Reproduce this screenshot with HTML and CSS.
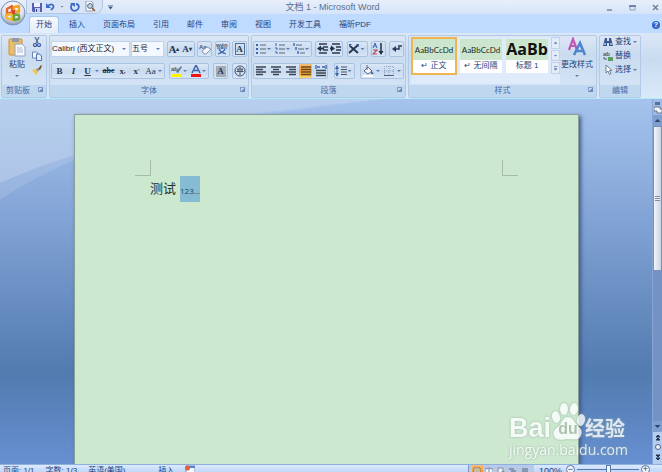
FILE: index.html
```html
<!DOCTYPE html>
<html lang="zh-CN">
<head>
<meta charset="utf-8">
<title>文档 1 - Microsoft Word</title>
<link rel="stylesheet" href="styles.css">
</head>
<body>
<div class="app">
  <header class="titlebar">
    <button class="orb" aria-label="Office">
      <svg viewBox="0 0 26 26" width="26" height="26"><defs><radialGradient id="orb" cx=".5" cy=".3" r=".7"><stop offset="0" stop-color="#fff"/><stop offset=".65" stop-color="#dde3ec"/><stop offset="1" stop-color="#8796ae"/></radialGradient></defs><circle cx="13" cy="13" r="12" fill="url(#orb)" stroke="#7f93b2"/><g fill="none" stroke-width="2.4" stroke-linejoin="round"><path d="M7 9l5-3v6l-5 2z" stroke="#e8622c"/><path d="M14 7l5-1v6l-5-1z" stroke="#f0a428"/><path d="M6 15l6-1v6l-5-2z" stroke="#f2b52c"/><path d="M14 14l5 1v4l-5 1z" stroke="#6aa63c"/></g><path d="M12 10h3v4h-3z" fill="#d9442a"/></svg>
    </button>
    <div class="quick">
      <button aria-label="保存"><svg viewBox="0 0 10 10" width="10" height="10"><path d="M0 1h10v9H1L0 9z" fill="#5360b4"/><path d="M2 1h6v4H2z" fill="#eef2ff"/><path d="M3 6h5v4H3z" fill="#c8d0ea"/><path d="M4 7h1v3H4z" fill="#3b468e"/></svg></button>
      <button aria-label="撤消"><svg viewBox="0 0 10 10" width="10" height="10"><path d="M2 4c3-3 7-1 5 2L5 8" fill="none" stroke="#3c6cc8" stroke-width="1.8"/><path d="M0 1v5h5z" fill="#3c6cc8"/></svg></button>
      <i class="arr"></i>
      <button aria-label="恢复"><svg viewBox="0 0 10 10" width="10" height="10"><path d="M2 2C-1 8 4 10 7 8s2-6-1-6" fill="none" stroke="#3c6cc8" stroke-width="1.8"/><path d="M0 1h5v4z" fill="#3c6cc8"/></svg></button>
      <button aria-label="打印预览"><svg viewBox="0 0 12 11" width="12" height="11"><path d="M2 0h5l2 2v8H2z" fill="#fff" stroke="#8b98b0"/><circle cx="6" cy="5" r="2.4" fill="#bcdcec" stroke="#55657d"/><path d="M8 7l3 3" stroke="#8a5d30" stroke-width="1.6"/></svg></button>
    </div>
    <i class="more"></i>
    <h1>文档 1 - Microsoft Word</h1>
    <div class="winctl">
      <button aria-label="最小化"><svg viewBox="0 0 7 7" width="7" height="7"><path d="M1 6h5" stroke="#6a7f9f" stroke-width="1.4"/></svg></button>
      <button aria-label="最大化"><svg viewBox="0 0 7 7" width="7" height="7"><path d="M1 2h5v4H1z" fill="none" stroke="#8ba0bd"/><path d="M0 2h7" stroke="#61769a" stroke-width="1.6"/></svg></button>
      <button aria-label="关闭"><svg viewBox="0 0 7 7" width="7" height="7"><path d="M1 1l5 5M6 1L1 6" stroke="#6a7f9f" stroke-width="1.4"/></svg></button>
    </div>
  </header>

  <nav class="tabs">
    <a href="#" class="on">开始</a><a href="#">插入</a><a href="#">页面布局</a><a href="#">引用</a><a href="#">邮件</a><a href="#">审阅</a><a href="#">视图</a><a href="#">开发工具</a><a href="#">福昕PDF</a>
    <button class="help" aria-label="帮助">?</button>
  </nav>

  <main class="ribbon">
    <section class="group clip">
      <div class="body">
        <button class="paste"><svg viewBox="0 0 18 20" width="18" height="20"><rect x="1" y="2" width="13" height="16" rx="1" fill="#edbd62" stroke="#c9923c"/><path d="M4 1h7v4H4z" fill="#8f99a8"/><path d="M7 7h7l3 3v9H7z" fill="#f7faff" stroke="#90a3c3"/><path d="M9 11h5M9 13h6M9 15h6" stroke="#a9b9d3"/></svg><span>粘贴</span><i class="arr"></i></button>
        <div class="side">
          <button aria-label="剪切"><svg viewBox="0 0 10 10" width="10" height="10"><path d="M3 0l3 6M7 0L4 6" stroke="#566f9c" stroke-width="1.3"/><circle cx="3" cy="8" r="1.5" fill="none" stroke="#3456a4" stroke-width="1.2"/><circle cx="7" cy="8" r="1.5" fill="none" stroke="#3456a4" stroke-width="1.2"/></svg></button>
          <button aria-label="复制"><svg viewBox="0 0 10 10" width="10" height="10"><path d="M.5 1h4l1 1v5h-5z" fill="#f3f8ff" stroke="#6885bb"/><path d="M4.500 3h3l2 2v4.500h-5z" fill="#e4eeff" stroke="#4b70b5"/></svg></button>
          <button aria-label="格式刷"><svg viewBox="0 0 10 10" width="10" height="10"><path d="M0 5l4-1 2 3-2 3z" fill="#efc650"/><path d="M4 4l2-1 1 2-1 2z" fill="#8890a0"/><path d="M6 4l3-4 1 1-2 4z" fill="#75563a"/></svg></button>
        </div>
      </div>
      <footer>剪贴板<i class="launch"></i></footer>
    </section>

    <section class="group font">
      <div class="body rows">
        <div class="row">
          <div class="combos">
            <label class="combo wide"><select aria-label="字体"><option>Calibri (西文正文)</option></select><i class="arr"></i></label>
            <label class="combo"><select aria-label="字号"><option>五号</option></select><i class="arr"></i></label>
          </div>
          <div class="set"><button class="serif big">A<sup>▴</sup></button><button class="serif">A<sup>▾</sup></button></div>
          <div class="set"><button aria-label="清除格式"><svg viewBox="0 0 12 12" width="12" height="12"><text x="0" y="6" class="tiny">Aa</text><path d="M3 8l5-4 4 2-5 5H5z" fill="#f4f5fa" stroke="#8795b4"/></svg></button></div>
          <div class="set"><button aria-label="拼音指南"><svg viewBox="0 0 12 12" width="12" height="12"><text x="0" y="4" class="tiny">wén</text><path d="M1 5h10M6 4v2M3 6c1 3 4 4 7 5M9 6c-1 3-4 4-7 5" stroke="#3964ae" stroke-width="1.2" fill="none"/></svg></button></div>
          <div class="set"><button class="serif"><b class="boxed">A</b></button></div>
        </div>
        <div class="row">
          <div class="set fmt">
            <button class="serif">B</button><button class="serif ital">I</button><button class="serif under">U</button><i class="arr"></i><button class="serif strike">abc</button><button class="serif">x<sub>,</sub></button><button class="serif">x<sup>'</sup></button><button class="serif thin">Aa</button><i class="arr"></i>
          </div>
          <div class="set">
            <button aria-label="突出显示"><svg viewBox="0 0 12 12" width="12" height="12"><text x="0" y="6" class="tiny">ab</text><path d="M5 7l5-6 1 1-4 6z" fill="#65758f"/><path d="M1 9h10v3H1z" fill="#fff200"/></svg></button><i class="arr"></i>
            <button aria-label="字体颜色"><svg viewBox="0 0 12 12" width="12" height="12"><path d="M2 8l4-8 4 8M4 5.500h4" fill="none" stroke="#3b62aa" stroke-width="1.500"/><path d="M1 9h10v3H1z" fill="#f01414"/></svg></button><i class="arr"></i>
          </div>
          <div class="set"><button class="serif"><b class="shaded">A</b></button></div>
          <div class="set"><button aria-label="带圈字符"><svg viewBox="0 0 12 12" width="12" height="12"><circle cx="6" cy="6" r="5" fill="none" stroke="#47536a"/><path d="M3 4h6M2.500 6.500h7M6 2v8M4 4v2.500M8 4v2.500" stroke="#47536a"/></svg></button></div>
        </div>
      </div>
      <footer>字体<i class="launch"></i></footer>
    </section>

    <section class="group para">
      <div class="body rows">
        <div class="row">
          <div class="set">
            <button aria-label="项目符号"><svg viewBox="0 0 12 12" width="12" height="12"><path d="M1 2h2M1 6h2M1 10h2" stroke="#3d66b1" stroke-width="2"/><path d="M5 2h6M5 6h6M5 10h6" stroke="#5c6678"/></svg></button><i class="arr"></i>
            <button aria-label="编号"><svg viewBox="0 0 12 12" width="12" height="12"><path d="M2 0v3M1 5h2v2M1 9h2v2" stroke="#3d66b1" fill="none"/><path d="M5 2h6M5 6h6M5 10h6" stroke="#5c6678"/></svg></button><i class="arr"></i>
            <button aria-label="多级列表"><svg viewBox="0 0 12 12" width="12" height="12"><path d="M1 0v3M3 4v3M5 8v3" stroke="#3d66b1" stroke-width="1.400"/><path d="M3 2h6M5 6h6M7 10h5" stroke="#5c6678"/></svg></button><i class="arr"></i>
          </div>
          <div class="set">
            <button aria-label="减少缩进量"><svg viewBox="0 0 12 12" width="12" height="12"><path d="M2 1h8M6 4h5M6 7h5M2 10h8" stroke="#30394b" stroke-width="1.500"/><path d="M0 5.500l4-3v6z" fill="#234"/><path d="M3 5.500h4" stroke="#234" stroke-width="2"/></svg></button>
            <button aria-label="增加缩进量"><svg viewBox="0 0 12 12" width="12" height="12"><path d="M2 1h8M6 4h5M6 7h5M2 10h8" stroke="#30394b" stroke-width="1.500"/><path d="M5 5.500l-4-3v6z" fill="#234"/><path d="M0 5.500h3" stroke="#234" stroke-width="2"/></svg></button>
          </div>
          <div class="set"><button aria-label="中文版式"><svg viewBox="0 0 12 12" width="12" height="12"><path d="M1 10l9-8M2 3l8 7" stroke="#26334d" stroke-width="1.800"/><path d="M1 1h3L1 4zM11 1H8l3 3z" fill="#3862aa"/></svg></button><i class="arr"></i></div>
          <div class="set"><button aria-label="排序"><svg viewBox="0 0 12 12" width="12" height="12"><path d="M1 5l2-5 2 5M2 3h2" fill="none" stroke="#3862b4"/><path d="M1 7h4l-4 4h4" fill="none" stroke="#bd4a5e" stroke-width="1.200"/><path d="M9 0v9" stroke="#222d42" stroke-width="1.500"/><path d="M6.500 8h5L9 12z" fill="#222d42"/></svg></button></div>
          <div class="set"><button aria-label="显示编辑标记"><svg viewBox="0 0 12 12" width="12" height="12"><path d="M8 2v4H4M9 3h2" fill="none" stroke="#2a3a58" stroke-width="1.500"/><path d="M5 3v6L1 6z" fill="#2a3a58"/></svg></button></div>
        </div>
        <div class="row">
          <div class="set align">
            <button aria-label="左对齐"><svg viewBox="0 0 12 12" width="12" height="12"><path d="M1 2h10M1 4.500h7M1 7h10M1 9.500h7" stroke="#3a4353" stroke-width="1.400"/></svg></button>
            <button aria-label="居中"><svg viewBox="0 0 12 12" width="12" height="12"><path d="M1 2h10M3 4.500h6M1 7h10M3 9.500h6" stroke="#3a4353" stroke-width="1.400"/></svg></button>
            <button aria-label="右对齐"><svg viewBox="0 0 12 12" width="12" height="12"><path d="M1 2h10M4 4.500h7M1 7h10M4 9.500h7" stroke="#3a4353" stroke-width="1.400"/></svg></button>
            <button class="active" aria-label="两端对齐"><svg viewBox="0 0 12 12" width="12" height="12"><path d="M1 2h10M1 4.500h10M1 7h10M1 9.500h10" stroke="#6b4a18" stroke-width="1.400"/></svg></button>
            <button aria-label="分散对齐"><svg viewBox="0 0 12 12" width="12" height="12"><path d="M1 0v4M11 0v4M2 2h3M7 2h3" stroke="#3b64aa" stroke-width="1.300"/><path d="M1 5.500h10M1 8h10M1 10.500h10" stroke="#3a4353" stroke-width="1.400"/></svg></button>
          </div>
          <div class="set"><button aria-label="行距"><svg viewBox="0 0 12 12" width="12" height="12"><path d="M2 2v8" stroke="#3b64aa"/><path d="M0 4l2-4 2 4zM0 8l2 4 2-4z" fill="#3b64aa"/><path d="M6 2h6M6 4.500h6M6 7h6M6 9.500h6" stroke="#4a5365"/></svg></button><i class="arr"></i></div>
          <div class="set fill">
            <button aria-label="底纹"><svg viewBox="0 0 12 12" width="12" height="12"><path d="M2 6l4-4 4 4-4 3z" fill="#f5f7fc" stroke="#5e6e8c"/><path d="M5 0v5" stroke="#5e6e8c"/><path d="M9 5l3 4H9z" fill="#416db5"/><path d="M1 10h10v2H1z" fill="#fff"/></svg></button><i class="arr"></i>
            <button aria-label="边框"><svg viewBox="0 0 12 12" width="12" height="12"><path d="M1.500 10V1.500h9V10M6 1v9M1 6h10" fill="none" stroke="#8da2c2" stroke-dasharray="1 1"/><path d="M1 10.500h10" stroke="#52617c"/></svg></button><i class="arr"></i>
          </div>
        </div>
      </div>
      <footer>段落<i class="launch"></i></footer>
    </section>

    <section class="group styles">
      <div class="body">
        <div class="gallery">
          <button class="card sel"><span class="sample">AaBbCcDd</span><span class="name">↵ 正文</span></button>
          <button class="card"><span class="sample">AaBbCcDd</span><span class="name">↵ 无间隔</span></button>
          <button class="card"><span class="sample head">AaBb</span><span class="name">标题 1</span></button>
          <div class="spin"><button aria-label="上"><i class="arr up"></i></button><button aria-label="下"><i class="arr"></i></button><button aria-label="更多"><i class="arr bar"></i></button></div>
        </div>
        <button class="change"><svg viewBox="0 0 20 20" width="20" height="20"><path d="M2 13L6 2l4 11M3 9h6" fill="none" stroke="#c058b4" stroke-width="2.200"/><path d="M7 18l6-12 5 12M9 14h7" fill="none" stroke="#4f84cf" stroke-width="2.600"/></svg><span>更改样式</span><i class="arr"></i></button>
      </div>
      <footer>样式<i class="launch"></i></footer>
    </section>

    <section class="group edit">
      <div class="body">
        <button><svg viewBox="0 0 10 10" width="10" height="10"><path d="M2 1h2v3h2V1h2l2 8H6V6H4v3H0z" fill="#3b568c"/><path d="M1 6h2v2H1zM7 6h2v2H7z" fill="#8fb2e5"/></svg>查找<i class="arr"></i></button>
        <button><svg viewBox="0 0 10 10" width="10" height="10"><text x="0" y="5" class="tiny">ab</text><path d="M1 6v2h3" fill="none" stroke="#4b5c7c"/><path d="M5 6h5v4H5z" fill="#57a05c"/></svg>替换</button>
        <button><svg viewBox="0 0 10 10" width="10" height="10"><path d="M3 0v8l2-2 1.500 3.500 1.500-1L6.500 5.500H9z" fill="#fff" stroke="#6b7c98"/></svg>选择<i class="arr"></i></button>
      </div>
      <footer>编辑</footer>
    </section>
  </main>

  <div class="work">
    <svg class="backdrop" viewBox="0 0 652 366" preserveAspectRatio="none"><defs><linearGradient id="sw" x1="0" y1="0" x2="0" y2="1"><stop offset="0" stop-color="#fff" stop-opacity=".1"/><stop offset="1" stop-color="#fff" stop-opacity=".2"/></linearGradient></defs><path d="M0 0h380Q170 24 74 56Q36 68 0 84z" fill="url(#sw)"/><path d="M0 0h380Q170 18 74 61Q34 78 0 101z" fill="#fff" opacity=".12"/></svg>
    <div class="canvas">
      <article class="page">
        <div class="marks"><i></i><i></i></div>
        <p><span>测试</span><mark>123...</mark></p>
      </article>
    </div>
    <div class="scroll">
      <button class="split" aria-label="拆分"></button>
      <button class="ruler" aria-label="标尺"><svg viewBox="0 0 8 8" width="8" height="8"><path d="M0 1h6v2h2v4H3V5H0z" fill="#f4f5fb" stroke="#6d7691"/></svg></button>
      <button class="dir" aria-label="向上"><i class="arr up"></i></button>
      <div class="track"><div class="thumb"><i></i></div></div>
      <button class="dir" aria-label="向下"><i class="arr"></i></button>
      <div class="browse">
        <svg viewBox="0 0 8 30" width="8" height="30"><path d="M2 5l2-2 2 2zM2 8l2-2 2 2zM2 23h4l-2 2zM2 26h4l-2 2z" fill="#26344f" stroke="#26344f"/><circle cx="4" cy="15" r="2.500" fill="#f0f4fa" stroke="#52617c"/></svg>
      </div>
    </div>
    <div class="brand">
      <div class="line"><b>Bai</b><span class="paw"><svg viewBox="0 0 34 39" width="34" height="39"><g fill="#fff"><ellipse cx="5" cy="15" rx="4" ry="6" transform="rotate(-12 5 15)"/><ellipse cx="13" cy="7" rx="4" ry="6"/><ellipse cx="23" cy="7" rx="4" ry="6" transform="rotate(8 23 7)"/><ellipse cx="30" cy="18" rx="4" ry="6" transform="rotate(12 30 18)"/><path d="M17 15c5 0 6 5 9 8s6 5 4 10c-2 6-8 4-13 4S6 40 3 34c-2-6 3-8 6-11 2-3 3-8 8-8z"/></g></svg><em>du</em></span><strong>经验</strong></div>
      <div class="url">jingyan.baidu.com</div>
    </div>
  </div>

  <footer class="status">
    <span>页面: 1/1</span><span>字数: 1/3</span><span class="lang">英语(美国)</span><span class="ins">插入</span>
    <svg class="rec" viewBox="0 0 10 10" width="10" height="10"><path d="M1 1h9v8H1z" fill="#f6f8ff" stroke="#6e8cc0"/><path d="M1 1h9v2H1z" fill="#5b82cc"/><circle cx="2.500" cy="3" r="2.500" fill="#e0603c"/></svg>
    <div class="views">
      <button class="active" aria-label="页面视图"><svg viewBox="0 0 8 8" width="8" height="8"><path d="M1 1h6v7H1z" fill="#fff" stroke="#8c7650"/><path d="M2 3h4M2 5h4" stroke="#8c7650"/></svg></button>
      <button aria-label="阅读版式"><svg viewBox="0 0 8 8" width="8" height="8"><path d="M0 2l4-1 4 1v6H0zM4 1v7" fill="#eef2fa" stroke="#7c8aa5"/></svg></button>
      <button aria-label="Web 版式"><svg viewBox="0 0 8 8" width="8" height="8"><path d="M1 1h5v6H1z" fill="#eef2fa" stroke="#7c8aa5"/><circle cx="6" cy="6" r="2" fill="#74977c"/></svg></button>
      <button aria-label="大纲"><svg viewBox="0 0 8 8" width="8" height="8"><path d="M0 2h5M2 4h5M3 6h5" stroke="#7786a0" stroke-width="1.500"/></svg></button>
      <button aria-label="普通"><svg viewBox="0 0 8 8" width="8" height="8"><path d="M1 2h6M1 4h6M1 6h6" stroke="#7786a0" stroke-width="1.500"/></svg></button>
    </div>
    <span class="pct">100%</span><button class="zoom" aria-label="缩小">−</button><input class="slider" type="range" aria-label="显示比例" value="50"><button class="zoom" aria-label="放大">+</button>
  </footer>
</div>
</body>
</html>
```
FILE: styles.css
```css
* { box-sizing: border-box; }
body {
  margin: 0;
  height: 100vh;
  overflow: hidden;
  font: 8px/12px "Liberation Sans", "Noto Sans CJK SC", sans-serif;
  color: #24427c;
}
button, select {
  margin: 0;
  padding: 0;
  border: 0;
  background: none;
  font: inherit;
  color: inherit;
}
button { display: flex; align-items: center; justify-content: center; }
svg { display: block; flex: none; }
a { color: inherit; text-decoration: none; }
.tiny { font: bold 6px "Liberation Sans", sans-serif; fill: #4a5872; }

.arr {
  flex: none;
  width: 4px;
  height: 2px;
  background: #5f7cab;
  clip-path: polygon(0 0, 100% 0, 50% 100%);
}
.arr.up { clip-path: polygon(50% 0, 100% 100%, 0 100%); }
.arr.bar { height: 5px; clip-path: polygon(0 0, 100% 0, 100% 20%, 0 20%, 0 50%, 100% 50%, 50% 100%, 0 50%); }

.app {
  display: flex;
  flex-direction: column;
  height: calc(100vh + 10px);
}

/* Title bar */
.titlebar {
  position: relative;
  display: flex;
  align-items: center;
  flex: none;
  height: 14px;
  padding-left: 26px;
  background: linear-gradient(#e8effa, #d5e4f8);
}
.orb { position: absolute; left: 0; top: 0; z-index: 2; }
.quick {
  display: flex;
  align-items: center;
  gap: 4px;
  height: 14px;
  padding: 0 6px 0 5px;
  border: 1px solid #b4c7e2;
  border-top: 0;
  border-radius: 0 0 8px 0;
  background: #d9e5f6;
}
.quick .arr { margin-right: 2px; }
.more {
  width: 5px;
  height: 5px;
  margin-left: 5px;
  background: #3f598c;
  clip-path: polygon(0 0, 100% 0, 100% 20%, 0 20%, 0 40%, 100% 40%, 50% 100%, 0 40%);
}
h1 {
  flex: 1;
  margin: 0;
  padding-right: 54px;
  text-align: center;
  font-size: 9px;
  line-height: 12px;
  font-weight: normal;
  color: #5a6d92;
}
.winctl { display: flex; gap: 16px; padding-right: 3px; }

/* Tabs */
.tabs {
  display: flex;
  align-items: stretch;
  flex: none;
  gap: 2px;
  height: 19px;
  padding: 2px 2px 0 29px;
  background: #bfdbff;
}
.tabs a { padding: 3px 8px 0; white-space: nowrap; }
.tabs .on {
  border: 1px solid #a9c5ea;
  border-bottom: 0;
  border-radius: 3px 3px 0 0;
  background: linear-gradient(#f4f9ff, #e2edfa);
  padding: 2px 6px 0;
}
.help {
  align-self: center;
  width: 8px;
  height: 8px;
  margin-left: auto;
  border-radius: 50%;
  background: #3265c8;
  color: #fff;
  font-size: 7px;
  font-weight: bold;
}

/* Ribbon */
.ribbon {
  display: flex;
  flex: none;
  gap: 2px;
  height: 66px;
  padding: 2px 1px 0;
  border-bottom: 1px solid #b5eaf4;
  background: linear-gradient(#dbe7f6, #c8dbf0 40%, #d9eaf9);
}
.group {
  display: flex;
  flex-direction: column;
  flex: none;
  border: 1px solid #b3cae6;
  border-radius: 2px;
  background: linear-gradient(#dce7f5, #cadbef 30%, #d6e6f7);
}
.body { display: flex; flex: 1; padding: 1px 2px; }
.group > footer {
  position: relative;
  height: 12px;
  text-align: center;
  line-height: 12px;
  background: #c0d7f0;
  color: #4a6ba4;
}
.launch {
  position: absolute;
  right: 3px;
  top: 2px;
  width: 5px;
  height: 5px;
  border: solid #7f9ac4;
  border-width: 1px 0 0 1px;
  background: linear-gradient(135deg, transparent 50%, #6d89b6 50%);
}
.clip { width: 46px; }
.clip > footer { padding-right: 12px; }
.clip .body { justify-content: space-between; padding: 1px 4px 0; }
.paste { flex-direction: column; justify-content: flex-start; width: 22px; }
.paste span { line-height: 16px; }
.paste .arr { margin-top: 2px; }
.side { display: flex; flex-direction: column; gap: 4px; }

.font { width: 200px; }
.para { width: 155px; }
.styles { width: 189px; }
.edit { width: 42px; }

.rows { flex-direction: column; gap: 6px; padding: 5px 1px 0; }
.row { display: flex; gap: 2px; height: 16px; justify-content: space-between; }
.combos { display: flex; gap: 1px; }
.combo {
  display: flex;
  align-items: center;
  width: 33px;
  padding-right: 3px;
  border: 1px solid #c2d4ec;
  background: #f3f8fe;
}
.combo.wide { width: 79px; }
.combo select { appearance: none; flex: 1; width: 0; color: #1b2433; }
.set {
  display: flex;
  align-items: center;
  border: 1px solid #a9c2e2;
  border-radius: 2px;
  background: linear-gradient(#d9e6f6, #c9dbf1 50%, #d6e5f6);
}
.set button { width: 13px; height: 14px; }
.set .arr { margin-right: 2px; }
.set.fmt { gap: 1px; padding-left: 1px; }
.set.align { gap: 2px; }
.set.fill .arr { margin: 0 2px; }
.serif { font: bold 9px/12px "Liberation Serif", serif; color: #27344e; }
.big { font-size: 11px; }
.serif sup, .serif sub { font-size: 6px; line-height: 0; }
.serif sup { vertical-align: 4px; }
.ital { font-style: italic; }
.under { text-decoration: underline; }
.strike { font-size: 8px; text-decoration: line-through; }
.thin { font-weight: normal; }
.boxed { width: 10px; line-height: 10px; border: 1px solid #5b6d8c; }
.shaded { width: 10px; line-height: 11px; background: #a3abb7; }
.active { border-radius: 1px; background: linear-gradient(#f5bd76, #f79b31 55%, #fbd670); }

/* Style gallery */
.styles .body { justify-content: space-between; }
.gallery { display: flex; gap: 2px; background: #dfeafa; }
.card {
  flex-direction: column;
  justify-content: flex-start;
  width: 44px;
  height: 38px;
  padding: 2px 1px;
  overflow: hidden;
}
.sel { width: 46px; padding: 0; border: 2px solid #eeb650; }
.sample {
  width: 100%;
  height: 21px;
  overflow: hidden;
  text-align: center;
  background: #cce6cd;
  font: 8px/22px Lato, sans-serif;
  color: #1c2a24;
}
.sample.head { font: bold 16px/20px "Open Sans", sans-serif; color: #111; }
.name { width: 100%; height: 13px; background: #fff; white-space: nowrap; }
.spin { display: flex; flex-direction: column; gap: 1px; width: 9px; height: 37px; }
.spin button { flex: 1; border: 1px solid #c0d2ea; background: #e2ecf9; }
.change { flex-direction: column; justify-content: flex-start; width: 34px; white-space: nowrap; }
.change span { line-height: 16px; }
.change .arr { margin-top: 2px; }
.edit .body { flex-direction: column; align-items: flex-start; gap: 2px; padding: 0 3px; }
.edit .body button { gap: 2px; height: 12px; }

/* Document area */
.work {
  position: relative;
  display: flex;
  flex: 1;
  min-height: 0;
  background: linear-gradient(#a5c3ec, #83a4d6 32%, #527baf 75%, #6690d1);
}
.backdrop { position: absolute; inset: 0; width: 100%; height: 100%; }
.canvas { position: relative; flex: 1; padding: 15px 73px 0 74px; overflow: hidden; }
.page {
  height: 100%;
  padding: 45px 60px 0;
  border: 1px solid #8b9f9a;
  border-bottom: 0;
  background: #cce8cf;
  box-shadow: 2px 2px 4px #3d5888;
}
.marks { display: flex; justify-content: space-between; }
.marks i { width: 16px; height: 16px; border: solid #a5bda8; border-width: 0 1px 1px 0; }
.marks i + i { border-width: 0 0 1px 1px; }
.page p {
  display: flex;
  align-items: center;
  gap: 4px;
  height: 26px;
  margin: 0 0 0 15px;
  font-size: 13px;
  color: #26302c;
}
.page mark {
  padding-top: 4px;
  height: 26px;
  font: 8px/22px "Open Sans", sans-serif;
  background: #86bcd3;
  color: #204a68;
}
.scroll {
  position: relative;
  display: flex;
  flex-direction: column;
  align-items: stretch;
  width: 10px;
  padding-top: 3px;
  border-left: 1px solid #86a6d8;
  background: #9dbbe6;
}
.split { height: 3px; margin: 0 2px; background: #56719f; }
.ruler { height: 10px; }
.dir { height: 11px; background: #7f9fd0; }
.dir .arr { width: 6px; height: 3px; background: #2f4468; }
.track { flex: 1; background: #7493c4; }
.thumb {
  display: flex;
  align-items: center;
  justify-content: center;
  height: 49%;
  border: 1px solid #7c8fae;
  border-radius: 1px;
  background: linear-gradient(90deg, #f2f5fa, #cbd4e2);
}
.thumb i { width: 5px; height: 5px; background: repeating-linear-gradient(#7f8b9f 0 1px, #e8ecf3 1px 2px); }
.browse { display: flex; justify-content: center; height: 32px; background: #b4cef3; }

/* Watermark over the page corner */
.brand {
  position: absolute;
  right: 34px;
  bottom: 6px;
  color: #fff;
  opacity: .8;
  filter: drop-shadow(0 0 1px #8ba69b);
}
.line { display: flex; align-items: flex-end; height: 39px; }
.line b { font: bold 27px/26px "Liberation Sans", sans-serif; }
.line strong { font: bold 20px/27px "Noto Sans CJK SC", sans-serif; }
.paw { position: relative; }
.paw em {
  position: absolute;
  left: 0;
  right: 0;
  bottom: 4px;
  text-align: center;
  font: bold 16px/16px "Liberation Sans", sans-serif;
  color: #a3bba8;
}
.url { font: 14px/17px "Open Sans", sans-serif; }

/* Status bar */
.status {
  display: flex;
  align-items: flex-start;
  flex: none;
  height: 18px;
  padding: 0 12px 0 3px;
  border-top: 1px solid #8fb0de;
  background: linear-gradient(#dceafd, #b1cdf4 60%);
  white-space: nowrap;
}
.status span { margin-right: 11px; }
.status .ins { margin-left: 22px; }
.views {
  display: flex;
  gap: 1px;
  margin-left: auto;
  padding: 0 3px;
  border-left: 1px solid #7895c4;
  background: #b7cbe8;
}
.views button { width: 11px; height: 12px; }
.status .pct { margin: 0 4px 0 5px; font-size: 9px; }
.zoom { width: 9px; height: 9px; border: 1px solid #5876a8; border-radius: 50%; background: #f0f5fd; font-size: 9px; line-height: 7px; }
.slider { appearance: none; width: 62px; height: 9px; margin: 0 2px; background: linear-gradient(#5876a8, #5876a8) center / 100% 1px no-repeat; }
.slider::-webkit-slider-thumb { appearance: none; width: 5px; height: 9px; border: 1px solid #5876a8; background: #f0f5fd; }
```
